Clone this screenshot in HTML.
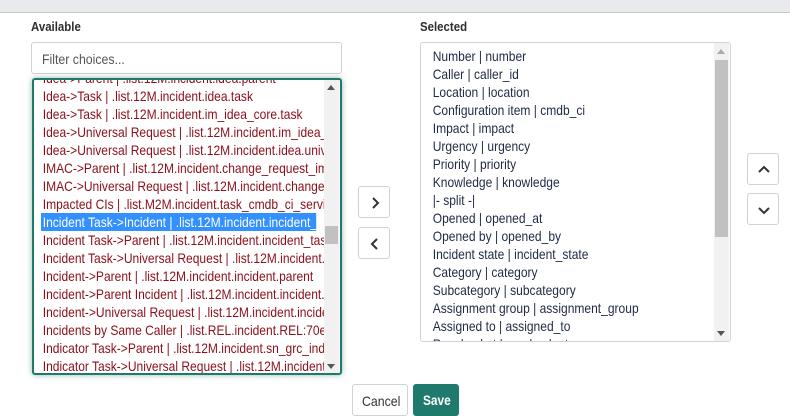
<!DOCTYPE html>
<html><head><style>
*{box-sizing:border-box;margin:0;padding:0}
body{width:790px;height:408px;background:#fff;font-family:"Liberation Sans",sans-serif;position:relative;overflow:hidden}
.top{position:absolute;left:0;top:0;width:790px;height:13px;background:#e8eaed;border-bottom:1px solid #c8cacc}
.lbl{position:absolute;font-size:13px;font-weight:bold;color:#2e2e2e;transform:scaleX(.88);transform-origin:left}
.inp{position:absolute;left:31px;top:42px;width:311px;height:32px;border:1px solid #cfd2d6;border-radius:3px;font-size:14px;color:#555;padding:8px 10px}
.inp span{display:inline-block;transform:scaleX(.88);transform-origin:left}
.box{position:absolute;overflow:hidden;background:#fff}
.left{left:32px;top:78px;width:310px;height:297px;border:2px solid #1f7a6b;border-radius:3px;box-shadow:0 0 6px rgba(31,122,107,.5)}
.right{left:420px;top:42px;width:311px;height:300px;border:1px solid #cfd2d6;border-radius:3px}
.inner{position:absolute;transform:scaleX(.86);transform-origin:left top;font-size:14px;line-height:18px;white-space:nowrap}
.left .inner{left:7px;top:-11px;color:#8b0f1a}
.right .inner{left:10px;top:4px;color:#1f2a44}
.inner div{padding-left:2px}
.sel{background:#3390ff;color:#fff;width:320px}
.sb{position:absolute;top:0;width:15px;background:#f1f1f1}
.thumb{position:absolute;left:1px;width:13px;background:#c1c1c1}
.btn{position:absolute;width:32px;height:32px;border:1px solid #cfd2d6;border-radius:3px;background:#fff}
.btn svg{position:absolute;left:8px;top:8px}
.tri{position:absolute;width:0;height:0;border-left:4px solid transparent;border-right:4px solid transparent}
</style></head><body>
<div class="top"></div>
<div class="lbl" style="left:31px;top:19px">Available</div>
<div class="lbl" style="left:420px;top:19px">Selected</div>
<div class="inp"><span>Filter choices...</span></div>
<div class="box left">
 <div style="position:absolute;left:0;top:0;width:290px;height:293px;overflow:hidden">
 <div class="inner">
  <div>Idea-&gt;Parent | .list.12M.incident.idea.parent</div>
  <div>Idea-&gt;Task | .list.12M.incident.idea.task</div>
  <div>Idea-&gt;Task | .list.12M.incident.im_idea_core.task</div>
  <div>Idea-&gt;Universal Request | .list.12M.incident.im_idea_core.universal_request</div>
  <div>Idea-&gt;Universal Request | .list.12M.incident.idea.universal_request</div>
  <div>IMAC-&gt;Parent | .list.12M.incident.change_request_imac.parent</div>
  <div>IMAC-&gt;Universal Request | .list.12M.incident.change_request_imac</div>
  <div>Impacted CIs | .list.M2M.incident.task_cmdb_ci_service.task</div>
  <div class="sel">Incident Task-&gt;Incident | .list.12M.incident.incident_task</div>
  <div>Incident Task-&gt;Parent | .list.12M.incident.incident_task.parent</div>
  <div>Incident Task-&gt;Universal Request | .list.12M.incident.incident_task</div>
  <div>Incident-&gt;Parent | .list.12M.incident.incident.parent</div>
  <div>Incident-&gt;Parent Incident | .list.12M.incident.incident.parent_incident</div>
  <div>Incident-&gt;Universal Request | .list.12M.incident.incident.universal</div>
  <div>Incidents by Same Caller | .list.REL.incident.REL:70e8</div>
  <div>Indicator Task-&gt;Parent | .list.12M.incident.sn_grc_indicator_task</div>
  <div>Indicator Task-&gt;Universal Request | .list.12M.incident.sn_grc</div>
 </div></div>
 <div class="sb" style="left:290px;height:293px"><div class="thumb" style="top:146px;height:18px"></div>
  <div class="tri" style="left:3px;top:5px;border-bottom:5px solid #555"></div>
  <div class="tri" style="left:3px;top:284px;border-top:5px solid #555"></div></div>
</div>
<div class="box right">
 <div class="inner">
  <div>Number | number</div><div>Caller | caller_id</div><div>Location | location</div>
  <div>Configuration item | cmdb_ci</div><div>Impact | impact</div><div>Urgency | urgency</div>
  <div>Priority | priority</div><div>Knowledge | knowledge</div><div>|- split -|</div>
  <div>Opened | opened_at</div><div>Opened by | opened_by</div><div>Incident state | incident_state</div>
  <div>Category | category</div><div>Subcategory | subcategory</div>
  <div>Assignment group | assignment_group</div><div>Assigned to | assigned_to</div><div>Resolved at | resolved_at</div>
 </div>
 <div class="sb" style="left:293px;height:298px"><div class="thumb" style="top:17px;height:177px"></div>
  <div class="tri" style="left:3px;top:6px;border-bottom:5px solid #aaa"></div>
  <div class="tri" style="left:3px;top:288px;border-top:5px solid #555"></div></div>
</div>
<div class="btn" style="left:358px;top:186px"><svg width="16" height="16"><path d="M6 3l5 5-5 5" fill="none" stroke="#333" stroke-width="2"/></svg></div>
<div class="btn" style="left:358px;top:227px"><svg width="16" height="16"><path d="M10 3l-5 5 5 5" fill="none" stroke="#333" stroke-width="2"/></svg></div>
<div class="btn" style="left:747px;top:153px"><svg width="16" height="16"><path d="M3 10l5-5 5 5" fill="none" stroke="#333" stroke-width="2"/></svg></div>
<div class="btn" style="left:747px;top:193px"><svg width="16" height="16"><path d="M3 6l5 5 5-5" fill="none" stroke="#333" stroke-width="2"/></svg></div>
<div style="position:absolute;left:352px;top:384px;width:56px;height:32px;border:1px solid #cfd2d6;border-radius:3px;font-size:14px;color:#333;padding:8px 0 0 9px"><span style="display:inline-block;transform:scaleX(.88);transform-origin:left">Cancel</span></div>
<div style="position:absolute;left:413px;top:384px;width:46px;height:32px;background:#1f7a6b;border-radius:3px;font-size:14px;font-weight:bold;color:#fff;padding:8px 0 0 10px"><span style="display:inline-block;transform:scaleX(.85);transform-origin:left">Save</span></div>
</body></html>
